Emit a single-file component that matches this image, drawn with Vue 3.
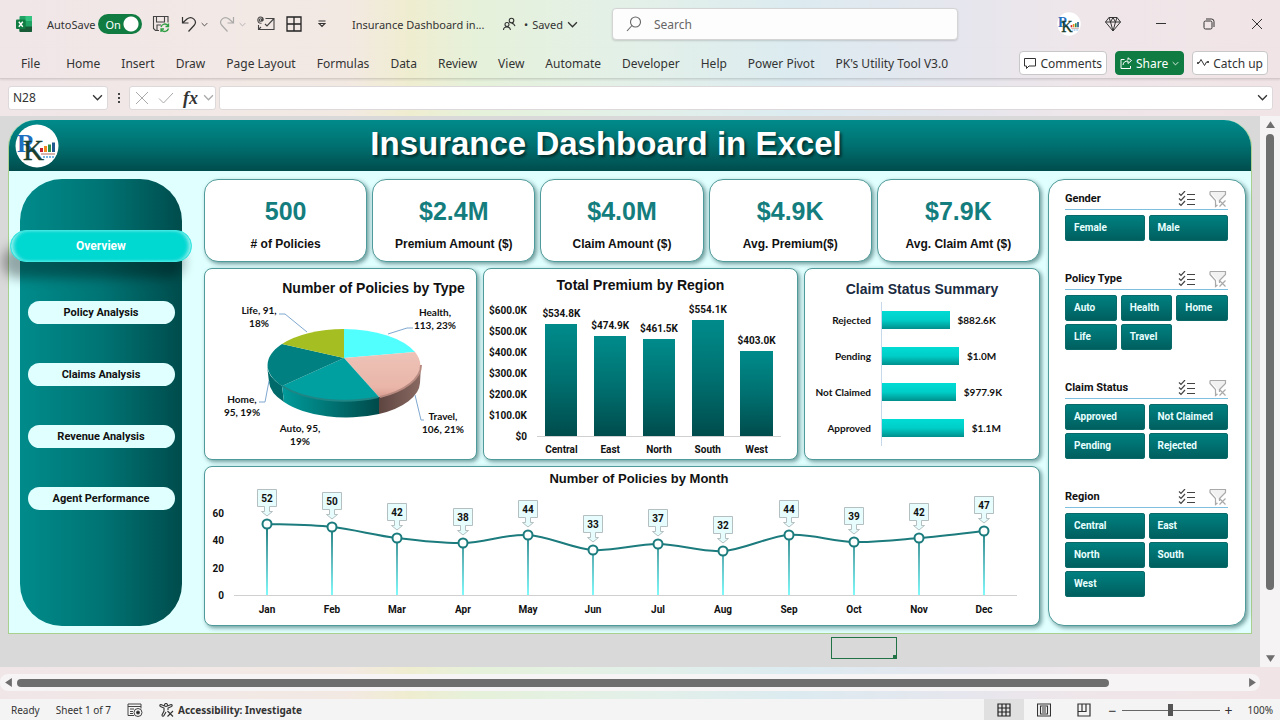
<template>
  <div class="window">
    <svg class="sprite" aria-hidden="true">
      <symbol id="chevron" viewBox="0 0 10 10"><path d="M1 3l4 4 4-4" fill="none" stroke="currentColor" stroke-width="1.2" /></symbol>
      <symbol id="multi-select" viewBox="0 0 18 16">
        <g fill="none" stroke="#444" stroke-width="1.200">
          <path d="M1 2.500l2 2L7 0M1 7.500l2 2L7 5M1 12.500l2 2L7 10" />
          <path d="M9 3.500h8M9 8.500h8M9 13.500h8" />
        </g>
      </symbol>
      <symbol id="clear-filter" viewBox="0 0 18 18">
        <path d="M1 1.500h15.500v3l-6 6V13M1 1.500v3l5.500 6v6L8.500 15" fill="#f1f1f1" stroke="#a9a9a9" stroke-width="1.200" />
        <path d="M10.500 10.500l6 6M16.500 10.500l-6 6" fill="none" stroke="#a9a9a9" stroke-width="1.200" />
      </symbol>
    </svg>

    <header class="titlebar">
      <div class="quick-access">
        <svg class="excel-icon" viewBox="0 0 16 16">
          <rect x="3.500" y="0" width="12.500" height="16" rx="1" fill="#21a366" />
          <path d="M9.500 0H15a1 1 0 0 1 1 1v4H9.500z" fill="#33c481" />
          <path d="M3.500 5h6v5.500h-6z" fill="#107c41" />
          <path d="M3.500 10.500H16V15a1 1 0 0 1-1 1H4.500a1 1 0 0 1-1-1z" fill="#185c37" />
          <rect x="0" y="3.500" width="9.500" height="9.500" rx="1" fill="#107c41" />
          <path d="M2.800 5.800l4 5M6.800 5.800l-4 5" stroke="#fff" stroke-width="1.400" />
        </svg>
        <label class="autosave">
          AutoSave
          <span class="toggle"><input v-model="autoSave" type="checkbox"><span class="toggle-text">On</span></span>
        </label>
        <button class="icon-btn save" aria-label="Save">
          <svg viewBox="0 0 18 18" width="18" height="18" fill="none" stroke="#444" stroke-width="1.100">
            <path d="M7 15.500H3.500L1.500 13.500V1.500h14.500v6M4.500 1.500v5.500h8v-5.500M5 15v-5h4" />
            <path d="M9 12a4 4 0 0 1 7-1.500M16.500 8.500v3h-3M16.500 13.500a4 4 0 0 1-7 1.500M9 17v-3h3" stroke="#2f9e44" stroke-width="1.300" />
          </svg>
        </button>
        <button class="icon-btn undo" aria-label="Undo">
          <svg viewBox="0 0 16 16" width="16" height="16" fill="none" stroke="#333" stroke-width="1.200"><path d="M1.500 1v6h6M1.500 7L6 3c5-4 11 2 7 6.500L7.500 15.500" /></svg>
          <svg class="chev-s"><use href="#chevron" /></svg>
        </button>
        <button class="icon-btn undo muted" aria-label="Redo">
          <svg viewBox="0 0 16 16" width="16" height="16" fill="none" stroke="#aaa" stroke-width="1.200"><path d="M14.500 1v6h-6M14.500 7L10 3C5-1 -1 5 3 9.500L8.500 15.500" /></svg>
          <svg class="chev-s"><use href="#chevron" /></svg>
        </button>
        <button class="icon-btn" aria-label="Email">
          <svg viewBox="0 0 18 16" width="18" height="16" fill="none" stroke="#444" stroke-width="1.100">
            <path d="M8.500 2.500h8.500v11H1.500V9M8 8l2 2L17 2.500M1.500 13.500L4 11" />
            <circle cx="3.500" cy="4" r="1.300" /><path d="M5 2.500v2.300c1.500.8 2.200-3.800-1.500-3.800S-.2 7.500 4.500 7.300" />
          </svg>
        </button>
        <button class="icon-btn" aria-label="Borders">
          <svg viewBox="0 0 16 16" width="16" height="16" fill="none" stroke="#222" stroke-width="1.300"><path d="M1 1h14v14H1zM8 1v14M1 8h14" /></svg>
        </button>
        <button class="icon-btn more" aria-label="Customize Quick Access Toolbar">
          <svg viewBox="0 0 8 8" width="8" height="8" fill="none" stroke="#333" stroke-width="1.200"><path d="M.5 1h7M1 3.500h6L4 6.500z" /></svg>
        </button>
      </div>
      <div class="doc-name">Insurance Dashboard in...</div>
      <button class="saved">
        <svg viewBox="0 0 14 14" width="14" height="14" fill="none" stroke="#333" stroke-width="1.100">
          <circle cx="9.500" cy="3.500" r="2.300" /><circle cx="5" cy="7.500" r="2" /><path d="M1.500 13c0-4 6.500-4 7 0M9.500 6.200c2 0 3 1.500 3.500 3" />
        </svg>
        <span class="dot">•</span> Saved
        <svg class="chev-m"><use href="#chevron" /></svg>
      </button>
      <label class="search">
        <svg viewBox="0 0 16 16" width="16" height="16" fill="none" stroke="#666" stroke-width="1.100"><circle cx="9.500" cy="6" r="5" /><path d="M6 9.500L1 15" /></svg>
        <input type="text" placeholder="Search" aria-label="Search">
      </label>
      <div class="window-controls">
        <PkLogo class="avatar" />
        <button class="icon-btn" aria-label="Premium">
          <svg viewBox="0 0 16 16" width="16" height="16" fill="none" stroke="#333" stroke-width="1"><path d="M4 1.500h8l3.500 4.500L8 15 .5 6zM.5 6h15M4 1.500L5.500 6 8 15l2.500-9L12 1.500M5.500 6L8 1.500 10.500 6" /></svg>
        </button>
        <button class="icon-btn" aria-label="Minimize"><svg viewBox="0 0 12 12" width="12" height="12" stroke="#333" fill="none"><path d="M1 5.500h10" /></svg></button>
        <button class="icon-btn" aria-label="Restore"><svg viewBox="0 0 12 12" width="12" height="12" stroke="#333" fill="none"><rect x="1" y="3" width="8" height="8" rx="1.500" /><path d="M3 1h5.500A2.500 2.500 0 0 1 11 3.500V9" /></svg></button>
        <button class="icon-btn" aria-label="Close"><svg viewBox="0 0 12 12" width="12" height="12" stroke="#333" fill="none"><path d="M1 1l10 10M11 1L1 11" /></svg></button>
      </div>
    </header>

    <nav class="ribbon">
      <div class="tabs">
        <button v-for="tab in tabs" :key="tab" class="tab">{{ tab }}</button>
      </div>
      <div class="ribbon-actions">
        <button class="action">
          <svg viewBox="0 0 12 12" width="12" height="12" fill="none" stroke="#333"><path d="M.5 1.500h11v7.500H5L2.500 11.500V9h-2z" /></svg>
          Comments
        </button>
        <button class="action share">
          <svg viewBox="0 0 12 12" width="12" height="12" fill="none" stroke="#fff"><path d="M4.500 2.500H1v9h9.500V9M3 8c.5-3 2-4 5-4V6.500L11.500 3.500 8 .8V3" /></svg>
          Share
          <svg class="chev-s"><use href="#chevron" /></svg>
        </button>
        <button class="action">
          <svg viewBox="0 0 12 12" width="12" height="12" fill="none" stroke="#333"><path d="M0 6h2L4 2.500l3.500 6L9.500 5H12" /><circle cx="1" cy="6" r=".6" /><circle cx="11" cy="5" r=".6" /></svg>
          Catch up
        </button>
      </div>
    </nav>

    <div class="formula-bar">
      <div class="name-box">
        <input v-model="cellRef" type="text" aria-label="Name box">
        <svg class="chev-m"><use href="#chevron" /></svg>
      </div>
      <span class="grip"><i /><i /><i /></span>
      <div class="fx-box">
        <button class="icon-btn" aria-label="Cancel"><svg viewBox="0 0 14 14" width="14" height="14" fill="none" stroke="#aaa"><path d="M1 1l12 12M13 1L1 13" /></svg></button>
        <button class="icon-btn" aria-label="Enter"><svg viewBox="0 0 16 14" width="16" height="14" fill="none" stroke="#aaa"><path d="M1 7.500l4.500 4.500L15 2" /></svg></button>
        <button class="icon-btn fx" aria-label="Insert function">fx</button>
        <svg class="chev-m muted"><use href="#chevron" /></svg>
      </div>
      <div class="formula">
        <input type="text" aria-label="Formula">
        <svg class="chev-m"><use href="#chevron" /></svg>
      </div>
    </div>

    <div class="workspace">
      <main class="sheet">
        <div class="dashboard">
          <div class="banner">
            <PkLogo class="banner-logo" />
            <h1>Insurance Dashboard in Excel</h1>
          </div>

          <div class="board">
            <aside class="sidebar">
              <button
                v-for="page in pages"
                :key="page"
                :class="['page-btn', { active: page === currentPage }]"
                @click="currentPage = page"
              >
                {{ page }}
              </button>
            </aside>

            <div class="center">
              <div class="kpis">
                <div v-for="kpi in kpis" :key="kpi.label" class="card kpi">
                  <div class="kpi-value">{{ kpi.value }}</div>
                  <div class="kpi-label">{{ kpi.label }}</div>
                </div>
              </div>

              <div class="charts">
                <section class="card pie-card">
                  <h2>Number of Policies by Type</h2>
                  <svg viewBox="0 28 271 160" class="pie">
                    <defs>
                      <linearGradient id="autoSide" x1="0" x2="1"><stop offset="0" stop-color="#009a9a" /><stop offset=".35" stop-color="#008080" /><stop offset="1" stop-color="#004a4a" /></linearGradient>
                      <linearGradient id="travelTop" x1="0" x2="0" y1="0" y2="1"><stop offset="0" stop-color="#eec3b8" /><stop offset=".8" stop-color="#e9b5a8" /><stop offset="1" stop-color="#d79d90" /></linearGradient>
                      <linearGradient id="travelSide" x1="0" x2="1"><stop offset="0" stop-color="#5e4540" /><stop offset="1" stop-color="#8a6a63" /></linearGradient>
                    </defs>
                    <path d="M62 95A77 36 0 0 0 77 116L79 132A76 36 0 0 1 64 112z" fill="#006a6a" />
                    <path d="M77 115A77 36 0 0 0 174 127V144A76 36 0 0 1 79 132z" fill="url(#autoSide)" />
                    <path d="M174 127A77 36 0 0 0 216 95L215 113A76 36 0 0 1 174 144z" fill="url(#travelSide)" />
                    <path d="M139 88V59A77 36 0 0 1 210 82z" fill="#52ffff" />
                    <path d="M139 88L210 82A77 36 0 0 1 174 127z" fill="url(#travelTop)" />
                    <path d="M139 88L174 127A77 36 0 0 1 77 116z" fill="#00a0a0" />
                    <path d="M139 88L77 116A77 36 0 0 1 77 74z" fill="#008080" />
                    <path d="M139 88L77 74A77 36 0 0 1 139 59z" fill="#a5bf22" />
                    <path d="M77 116A77 36 0 0 0 173 127" fill="none" stroke="#1f8585" stroke-width="2" />
                    <path d="M175 127A77 36 0 0 0 216 95" fill="none" stroke="#b98a80" stroke-width="2" />
                    <g fill="none" stroke="#7fa8d0">
                      <path d="M74 44h6l22 18M208 58h-6l-19 6M54 132h6l4-21M219 150h-3l-6-25" />
                    </g>
                    <g class="pie-label">
                      <text v-for="l in pieLabels" :key="l.name" :x="l.x" :y="l.y">
                        <tspan>{{ l.name }}</tspan><tspan :x="l.x" :y="l.y + 13">{{ l.value }}</tspan>
                      </text>
                    </g>
                  </svg>
                </section>

                <section class="card bar-card">
                  <h2>Total Premium by Region</h2>
                  <div class="bar-chart">
                    <div class="y-axis">
                      <span v-for="tick in premiumTicks" :key="tick">{{ tick }}</span>
                    </div>
                    <div class="bar-plot">
                      <div class="bars">
                        <div v-for="r in regions" :key="r.name" class="bar-col">
                          <span>${{ r.premium.toFixed(1) }}K</span>
                          <div class="bar" :style="{ height: r.premium / 6 + '%' }"></div>
                        </div>
                      </div>
                      <div class="bar-names">
                        <span v-for="r in regions" :key="r.name">{{ r.name }}</span>
                      </div>
                    </div>
                  </div>
                </section>

                <section class="card claim-card">
                  <h2>Claim Status Summary</h2>
                  <div class="claim-rows">
                    <div v-for="c in claims" :key="c.name" class="claim-row">
                      <span class="claim-name">{{ c.name }}</span>
                      <div class="claim-track">
                        <div class="claim-bar" :style="{ width: c.share + '%' }"></div>
                        <span>{{ c.label }}</span>
                      </div>
                    </div>
                  </div>
                </section>
              </div>

              <section class="card line-card">
                <h2>Number of Policies by Month</h2>
                <svg viewBox="0 24 834 135" class="line-chart">
                  <defs>
                    <linearGradient id="drop" gradientUnits="userSpaceOnUse" x1="0" x2="0" y1="60" y2="129"><stop offset="0" stop-color="#1f7f80" /><stop offset=".5" stop-color="#5fb9bd" /><stop offset="1" stop-color="#7ffafa" /></linearGradient>
                  </defs>
                  <path d="M29 129.500H812" stroke="#d0d0d0" />
                  <text v-for="t in [0, 20, 40, 60]" :key="t" x="19" :y="yOf(t) + 4" text-anchor="end">{{ t }}</text>
                  <rect v-for="p in points" :key="p.month" :x="p.x - 1" :y="p.y" width="2" :height="129 - p.y" fill="url(#drop)" />
                  <path :d="curve" fill="none" stroke="#1b7b7d" stroke-width="2" />
                  <g v-for="p in points" :key="p.month">
                    <path :d="callout(p)" fill="#e6fcfd" stroke="#b3bfc0" />
                    <circle :cx="p.x" :cy="p.y" r="4.500" fill="#fff" stroke="#1b7b7d" stroke-width="2" />
                    <text :x="p.x" :y="p.y - 22" text-anchor="middle">{{ p.count }}</text>
                    <text :x="p.x" y="147" text-anchor="middle">{{ p.month }}</text>
                  </g>
                </svg>
              </section>
            </div>

            <aside class="card slicers">
              <section v-for="s in slicers" :key="s.title" class="slicer">
                <div class="slicer-head">
                  <h3>{{ s.title }}</h3>
                  <button class="icon-btn" aria-label="Multi-select"><svg width="18" height="16"><use href="#multi-select" /></svg></button>
                  <button class="icon-btn" aria-label="Clear filter"><svg width="18" height="18"><use href="#clear-filter" /></svg></button>
                </div>
                <div :class="['slicer-items', { three: s.columns === 3 }]">
                  <button v-for="item in s.items" :key="item">{{ item }}</button>
                </div>
              </section>
            </aside>
          </div>
        </div>
        <div class="active-cell"></div>
      </main>
      <div class="v-scroll">
        <svg viewBox="0 0 8 8"><path d="M4 1l4 6H0z" fill="#6e6e6e" /></svg>
        <div class="v-thumb"></div>
        <svg viewBox="0 0 8 8"><path d="M4 7L0 1h8z" fill="#6e6e6e" /></svg>
      </div>
    </div>

    <div class="h-scroll">
      <div class="h-track">
        <svg viewBox="0 0 8 8"><path d="M1 4l6-4v8z" fill="#6e6e6e" /></svg>
        <div class="h-rail"><div class="h-thumb"></div></div>
        <svg viewBox="0 0 8 8"><path d="M7 4L1 0v8z" fill="#6e6e6e" /></svg>
      </div>
    </div>

    <footer class="status">
      <span>Ready</span>
      <span>Sheet 1 of 7</span>
      <svg viewBox="0 0 16 14" width="16" height="14" fill="none" stroke="#444"><path d="M7 12.500H1V1h13v4.500M1 3.500h13M3 6h4M3 8.500h3M3 10.500h3" /><circle cx="11" cy="9.500" r="4" /><circle cx="11" cy="9.500" r="1.500" fill="#222" /></svg>
      <button class="a11y">
        <svg viewBox="0 0 16 14" width="16" height="14" fill="none" stroke="#333" stroke-width="1.100"><circle cx="7" cy="2" r="1.500" /><path d="M5.500 3L2 1.500C.5 1.500.5 3 1.500 3.500L5 5v3l-2 4c0 1.500 1.500 1.500 2 .5L7 9M8.500 3L12 1.500c1.500 0 1.500 1.500.5 2L9 5v2M8.500 8l5.500 5.500M14 8l-5.500 5.500" /></svg>
        Accessibility: Investigate
      </button>
      <div class="views">
        <button class="selected" aria-label="Normal view"><svg viewBox="0 0 14 14" width="14" height="14" fill="none" stroke="#222" stroke-width="1.200"><path d="M1 1h12v12H1zM5 1v12M9 1v12M1 5h12M1 9h12" /></svg></button>
        <button aria-label="Page layout view"><svg viewBox="0 0 14 14" width="14" height="14" fill="none" stroke="#333" stroke-width="1.100"><path d="M.5 1h13v12H.5zM3.500 3h7v8h-7zM5 5h4M5 7h4M5 9h4" /></svg></button>
        <button aria-label="Page break view"><svg viewBox="0 0 14 14" width="14" height="14" fill="none" stroke="#333" stroke-width="1.200"><path d="M1 1h12v12H1zM1 8.500h8V1M5 1v7.500" /></svg></button>
      </div>
      <div class="zoom">
        <button aria-label="Zoom out">−</button>
        <input v-model="zoom" type="range" min="0" max="200" aria-label="Zoom">
        <button aria-label="Zoom in">+</button>
        <span class="zoom-value">{{ zoom }}%</span>
      </div>
    </footer>
  </div>
</template>

<script setup>
import { ref, computed, h } from 'vue'

const autoSave = ref(true)
const cellRef = ref('N28')
const zoom = ref(100)
const currentPage = ref('Overview')

// Round logo, used in the title bar and in the banner
const PkLogo = () =>
  h('svg', { viewBox: '0 0 44 44', 'font-family': 'Liberation Serif, serif' }, [
    h('circle', { cx: 22, cy: 22, r: 21.5, fill: '#fff' }),
    h('path', { d: 'M25 24h3v4h-3z', fill: '#c8202c' }),
    h('path', { d: 'M29 22h3v6h-3z', fill: '#ef8a1d' }),
    h('path', { d: 'M33 20.500h3v7.500h-3z', fill: '#2c8f4b' }),
    h('path', { d: 'M37 18.500h3v9.500h-3z', fill: '#20588f' }),
    h('path', { d: 'M26 30h14', stroke: '#b56a60' }),
    h('path', { d: 'M28 33h11', stroke: '#4fa3dc', 'stroke-width': 1.6, 'stroke-dasharray': '2 1' }),
    h('text', { x: 2, y: 28, 'font-size': 25, 'font-weight': 700, fill: '#1f6fc0' }, 'R'),
    h('text', { x: 8, y: 36, 'font-size': 29, fill: '#17402f', stroke: '#17402f', 'stroke-width': 0.5 }, 'K')
  ])

const tabs = [
  'File', 'Home', 'Insert', 'Draw', 'Page Layout', 'Formulas', 'Data', 'Review', 'View',
  'Automate', 'Developer', 'Help', 'Power Pivot', "PK's Utility Tool V3.0"
]

const pages = ['Overview', 'Policy Analysis', 'Claims Analysis', 'Revenue Analysis', 'Agent Performance']

const kpis = [
  { value: '500', label: '# of Policies' },
  { value: '$2.4M', label: 'Premium Amount ($)' },
  { value: '$4.0M', label: 'Claim Amount ($)' },
  { value: '$4.9K', label: 'Avg. Premium($)' },
  { value: '$7.9K', label: 'Avg. Claim Amt ($)' }
]

const pieLabels = [
  { name: 'Life, 91,', value: '18%', x: 54, y: 44 },
  { name: 'Health,', value: '113, 23%', x: 230, y: 46 },
  { name: 'Home,', value: '95, 19%', x: 37, y: 133 },
  { name: 'Auto, 95,', value: '19%', x: 95, y: 162 },
  { name: 'Travel,', value: '106, 21%', x: 238, y: 150 }
]

const premiumTicks = ['$600.0K', '$500.0K', '$400.0K', '$300.0K', '$200.0K', '$100.0K', '$0']

const regions = [
  { name: 'Central', premium: 534.8 },
  { name: 'East', premium: 474.9 },
  { name: 'North', premium: 461.5 },
  { name: 'South', premium: 554.1 },
  { name: 'West', premium: 403.0 }
]

const claims = [
  { name: 'Rejected', label: '$882.6K', share: 43 },
  { name: 'Pending', label: '$1.0M', share: 49 },
  { name: 'Not Claimed', label: '$977.9K', share: 47 },
  { name: 'Approved', label: '$1.1M', share: 52 }
]

const slicers = [
  { title: 'Gender', columns: 2, items: ['Female', 'Male'] },
  { title: 'Policy Type', columns: 3, items: ['Auto', 'Health', 'Home', 'Life', 'Travel'] },
  { title: 'Claim Status', columns: 2, items: ['Approved', 'Not Claimed', 'Pending', 'Rejected'] },
  { title: 'Region', columns: 2, items: ['Central', 'East', 'North', 'South', 'West'] }
]

// Monthly line
const months = ['Jan', 'Feb', 'Mar', 'Apr', 'May', 'Jun', 'Jul', 'Aug', 'Sep', 'Oct', 'Nov', 'Dec']
const counts = [52, 50, 42, 38, 44, 33, 37, 32, 44, 39, 42, 47]

const yOf = (v) => Math.round(129 - v * 1.367)

const points = computed(() =>
  months.map((month, i) => ({ month, count: counts[i], x: Math.round(62 + i * 65.2), y: yOf(counts[i]) }))
)

// Smooth curve through every point
const curve = computed(() => {
  const p = points.value
  let d = `M${p[0].x} ${p[0].y}`
  for (let i = 0; i < p.length - 1; i++) {
    const a = p[i - 1] || p[i]
    const b = p[i]
    const c = p[i + 1]
    const e = p[i + 2] || c
    d += `C${b.x + (c.x - a.x) / 6} ${b.y + (c.y - a.y) / 6} ${c.x - (e.x - b.x) / 6} ${c.y - (e.y - b.y) / 6} ${c.x} ${c.y}`
  }
  return d
})

const callout = (p) =>
  `M${p.x - 9.5} ${p.y - 34.5}h19v17h-7v5h3l-5.500 4.500l-5.500 -4.500h3v-5h-7z`
</script>

<style>
body {
  margin: 0;
}
</style>

<style scoped>
.window {
  min-height: 100vh;
  display: flex;
  flex-direction: column;
  font-family: "Noto Sans", "Open Sans", sans-serif;
  font-size: 12px;
  color: #333;
  background: linear-gradient(90deg, #f0e6e8 0%, #f3e9e3 27%, #efedd0 32%, #e6f1da 37%, #e3f0e9 50%, #dcebf0 62%, #e6e6ee 75%, #efe6e9 85%, #f1e4e6 100%);
}

.sprite {
  position: absolute;
  width: 0;
  height: 0;
}

button {
  font: inherit;
  color: inherit;
  border: none;
  background: none;
  padding: 0;
  cursor: pointer;
  white-space: nowrap;
}

input {
  font: inherit;
  color: inherit;
  border: none;
  background: none;
  padding: 0;
  min-width: 0;
  outline: none;
}

h1, h2, h3 {
  margin: 0;
}

.icon-btn {
  display: flex;
  align-items: center;
  justify-content: center;
}

.chev-s {
  width: 7px;
  height: 7px;
}

.chev-m {
  width: 11px;
  height: 11px;
  flex: none;
}

.muted {
  color: #aaa;
}

/* Title bar */
.titlebar {
  height: 48px;
  display: flex;
  align-items: center;
  padding: 0 17px 0 16px;
}

.quick-access {
  width: 336px;
  display: flex;
  align-items: center;
  gap: 11px;
  flex: none;
}

.excel-icon {
  width: 16px;
  height: 16px;
}

.autosave {
  display: flex;
  align-items: center;
  gap: 3px;
  width: 94px;
  margin-left: 4px;
  font-size: 11px;
}

.toggle {
  display: grid;
  align-items: center;
  flex: none;
}

.toggle input,
.toggle-text {
  grid-area: 1 / 1;
}

.toggle input {
  appearance: none;
  width: 44px;
  height: 20px;
  margin: 0;
  border-radius: 10px;
  background: radial-gradient(circle at 33px 10px, #fff 7px, transparent 8px) #107c41;
}

.toggle-text {
  padding-left: 7px;
  color: #fff;
  pointer-events: none;
}

.undo {
  gap: 4px;
}

.more {
  margin-left: 5px;
}

.doc-name {
  width: 150px;
  flex: none;
  font-size: 11px;
  white-space: nowrap;
}

.saved {
  display: flex;
  align-items: center;
  gap: 4px;
  width: 110px;
  flex: none;
  font-size: 11px;
}

.dot {
  margin-left: 4px;
}

.search {
  display: flex;
  align-items: center;
  gap: 12px;
  flex: 0 1 346px;
  box-sizing: border-box;
  height: 32px;
  padding: 0 13px;
  background: #fdfdfd;
  border: 1px solid #d4d4d4;
  border-radius: 4px;
  box-shadow: 0 1px 2px rgba(0, 0, 0, 0.15);
}

.search input {
  flex: 1;
}

.search input::placeholder {
  color: #666;
  opacity: 1;
}

.window-controls {
  margin-left: auto;
  display: flex;
  align-items: center;
  gap: 36px;
}

.window-controls .icon-btn:first-of-type {
  margin: 0 -2px 0 -12px;
}

.avatar {
  width: 24px;
  height: 24px;
}

/* Ribbon */
.ribbon {
  height: 31px;
  display: flex;
  justify-content: space-between;
  padding: 0 12px 0 21px;
  border-bottom: 1px solid rgba(0, 0, 0, 0.12);
  box-sizing: border-box;
  box-shadow: 0 1px 2px rgba(0, 0, 0, 0.1);
}

.tabs {
  display: flex;
  gap: 21px;
  padding-top: 1px;
}

.tab:first-child {
  margin-right: 5px;
}

.ribbon-actions {
  display: flex;
  gap: 8px;
  padding: 3px 0;
}

.action {
  display: flex;
  align-items: center;
  gap: 4px;
  padding: 0 4px;
  background: #fff;
  border: 1px solid #c8c8c8;
  border-radius: 4px;
}

.share {
  background: #107c41;
  border-color: #107c41;
  color: #fff;
}

/* Formula bar */
.formula-bar {
  height: 37px;
  display: flex;
  align-items: center;
  padding: 0 7px 0 8px;
}

.name-box,
.fx-box,
.formula {
  display: flex;
  align-items: center;
  height: 22px;
  background: #fff;
  border: 1px solid #ddd8da;
  border-radius: 3px;
}

.name-box {
  width: 90px;
  padding: 0 4px;
}

.name-box input {
  flex: 1;
}

.grip {
  display: grid;
  gap: 2px;
  margin: 0 9px 0 10px;
}

.grip i {
  width: 2px;
  height: 2px;
  background: #444;
}

.fx-box {
  gap: 9px;
  padding: 0 1px 0 5px;
  margin-right: 3px;
}

.fx {
  font: italic 700 18px/20px "Liberation Serif", serif;
}

.fx-box .chev-m {
  margin-left: -4px;
}

.formula {
  flex: 1;
  padding: 0 4px;
}

.formula input {
  flex: 1;
}

/* Sheet */
.workspace {
  flex: 1;
  display: flex;
}

.sheet {
  flex: 1;
  background: #d9d9d9;
  padding: 4px 8px 8px;
}

.dashboard {
  background: #e0ffff;
  border: 1px solid #a9d08e;
  border-top: none;
  border-radius: 27px 27px 0 0;
}

.banner {
  height: 51px;
  display: flex;
  align-items: center;
  padding-left: 6px;
  border-radius: 27px 27px 0 0;
  background: linear-gradient(#008b8b, #007070 50%, #004c4c);
}

.banner-logo {
  width: 44px;
  height: 44px;
}

.banner h1 {
  flex: 1;
  padding: 0 98px 4px 0;
  text-align: center;
  font: 700 33px/44px "Liberation Sans", sans-serif;
  color: #fff;
  text-shadow: 2px 2px 3px rgba(0, 0, 0, 0.6);
}

.board {
  display: flex;
  padding: 8px 5px 7px 11px;
}

.sidebar {
  width: 162px;
  flex: none;
  display: flex;
  flex-direction: column;
  align-items: center;
  gap: 39px;
  padding-top: 51px;
  box-sizing: border-box;
  border-radius: 42px;
  background: linear-gradient(90deg, #008b8b, #007474 50%, #004c4c);
}

.page-btn {
  width: 147px;
  height: 23px;
  border-radius: 12px;
  background: #e0ffff;
  font: 700 11px/23px "Roboto", sans-serif;
  color: #111;
}

.page-btn.active {
  width: 182px;
  height: 32px;
  border-radius: 16px;
  border: 1px solid #3ee8e2;
  background: #00d8d2;
  box-shadow: inset 4px 0 4px -2px rgba(255, 255, 255, 0.7), inset -4px 0 4px -2px rgba(255, 255, 255, 0.7), -8px 16px 12px rgba(0, 0, 0, 0.35);
  font-size: 12px;
  color: #fff;
}

.center {
  flex: 1;
  min-width: 0;
  display: grid;
  gap: 6px;
  margin: 0 8px 0 22px;
}

.card {
  background: #fff;
  border: 1px solid #4f9a9a;
  border-radius: 8px;
  box-sizing: border-box;
  box-shadow: 2px 2px 4px rgba(0, 60, 60, 0.5);
}

.kpis {
  display: grid;
  grid-template-columns: repeat(5, 1fr);
  gap: 5px;
}

.kpi {
  height: 83px;
  padding-top: 15px;
  border-radius: 14px;
  text-align: center;
  font-family: "Liberation Sans", sans-serif;
  font-weight: 700;
}

.kpi-value {
  font-size: 25px;
  line-height: 32px;
  color: #147d7d;
}

.kpi-label {
  font-size: 12px;
  line-height: 34px;
  color: #111;
}

.card h2 {
  font: 700 14px/20px "Liberation Sans", sans-serif;
  text-align: center;
  color: #111;
}

.charts {
  display: grid;
  grid-template-columns: 273fr 315fr 236fr;
  gap: 6px;
}

.pie-card h2 {
  padding: 9px 0 0 66px;
}

.pie {
  display: block;
  width: 100%;
}

.pie-label {
  font: 700 10px "Lato", sans-serif;
  text-anchor: middle;
  fill: #111;
}

.bar-card h2 {
  padding-top: 6px;
}

.bar-chart {
  display: flex;
  gap: 10px;
  padding: 5px 16px 0 5px;
  font: 700 10px/21px "Roboto", sans-serif;
  color: #111;
}

.y-axis {
  display: grid;
  align-content: start;
  text-align: right;
}

.bar-plot {
  flex: 1;
  padding-top: 10px;
}

.bars {
  height: 126px;
  display: grid;
  grid-template-columns: repeat(5, 1fr);
  border-bottom: 1px solid #d0d0d0;
}

.bar-col {
  display: flex;
  flex-direction: column;
  justify-content: flex-end;
  align-items: center;
  min-width: 0;
}

.bar {
  width: 66%;
  flex: none;
  background: linear-gradient(#008b8b, #007070 50%, #004c4c);
}

.bar-names {
  display: grid;
  grid-template-columns: repeat(5, 1fr);
  padding-top: 4px;
  text-align: center;
  line-height: 18px;
}

.claim-card h2 {
  padding-top: 10px;
  color: #1a2b3f;
}

.claim-rows {
  display: flex;
  flex-direction: column;
  padding-top: 3px;
  font: 700 10px/18px "Lato", sans-serif;
  color: #111;
}

.claim-row {
  display: flex;
  gap: 10px;
}

.claim-name {
  width: 66px;
  text-align: right;
  padding: 9px 0;
}

.claim-track {
  flex: 1;
  display: flex;
  align-items: center;
  gap: 8px;
  border-left: 1px solid #c5d9ea;
}

.claim-bar {
  height: 18px;
  background: linear-gradient(#00dcd4, #00cec8 50%, #008f8c);
}

.line-card h2 {
  padding: 2px 0 1px 34px;
  font-size: 13px;
}

.line-chart {
  display: block;
  width: 100%;
  overflow: visible;
  font: 700 10px "Roboto", sans-serif;
  fill: #111;
}

/* Slicers */
.slicers {
  width: 198px;
  flex: none;
  display: flex;
  flex-direction: column;
  gap: 27px;
  padding: 8px 17px 0 16px;
  border-radius: 16px;
}

.slicer-head {
  display: flex;
  align-items: center;
  gap: 13px;
  height: 21px;
  padding-right: 1px;
  border-bottom: 1px solid #7fbfdf;
  margin-bottom: 5px;
}

.slicer-head h3 {
  flex: 1;
  font: 700 11px/20px "Roboto", sans-serif;
  color: #111;
}

.slicer-items {
  display: grid;
  grid-template-columns: repeat(2, 1fr);
  gap: 3px 4px;
}

.slicer-items.three {
  grid-template-columns: repeat(3, 1fr);
}

.slicer-items button {
  height: 26px;
  padding-left: 8px;
  text-align: left;
  border: 1px solid #0a6a6a;
  border-radius: 2px;
  background: linear-gradient(#008080, #005f5f);
  font: 700 10px/24px "Roboto", sans-serif;
  color: #e8ffff;
}

.active-cell {
  width: 64px;
  height: 20px;
  margin: 3px 0 0 823px;
  border: 1px solid #217346;
  background: linear-gradient(#217346, #217346) right bottom / 3px 3px no-repeat;
}

/* Scrollbars */
.v-scroll {
  width: 20px;
  display: flex;
  flex-direction: column;
  align-items: center;
  gap: 5px;
  padding: 4px 0;
  box-sizing: border-box;
  background: #f6f3f4;
}

.v-scroll svg,
.h-track svg {
  width: 9px;
  height: 9px;
  flex: none;
}

.v-thumb {
  width: 8px;
  height: 84%;
  margin-bottom: auto;
  border-radius: 4px;
  background: #6e6e6e;
}

.h-scroll {
  padding: 7px 20px 8px 0;
}

.h-track {
  display: flex;
  align-items: center;
  gap: 4px;
  height: 17px;
  padding: 0 3px 0 4px;
  border-radius: 8px;
  background: #f6f4f4;
}

.h-rail {
  flex: 1;
}

.h-thumb {
  width: 89%;
  height: 8px;
  border-radius: 4px;
  background: #6e6e6e;
}

/* Status bar */
.status {
  height: 22px;
  display: flex;
  align-items: center;
  padding: 0 7px 0 11px;
  gap: 16px;
  background: #f4f4f4;
  font-size: 10px;
}

.a11y {
  display: flex;
  align-items: center;
  gap: 3px;
  font-weight: 700;
}

.views {
  margin-left: auto;
  display: flex;
  height: 100%;
}

.views button {
  width: 40px;
  display: grid;
  place-items: center;
}

.views .selected {
  background: #e0e0e0;
}

.zoom {
  display: flex;
  align-items: center;
  gap: 5px;
  margin-left: -12px;
}

.zoom button {
  font-size: 14px;
}

.zoom input {
  appearance: none;
  width: 98px;
  height: 14px;
  margin: 0;
  background: linear-gradient(#666, #666) center / 100% 1px no-repeat;
}

.zoom input::-webkit-slider-thumb {
  appearance: none;
  width: 5px;
  height: 12px;
  background: #555;
}

.zoom-value {
  margin-left: 10px;
}
</style>
